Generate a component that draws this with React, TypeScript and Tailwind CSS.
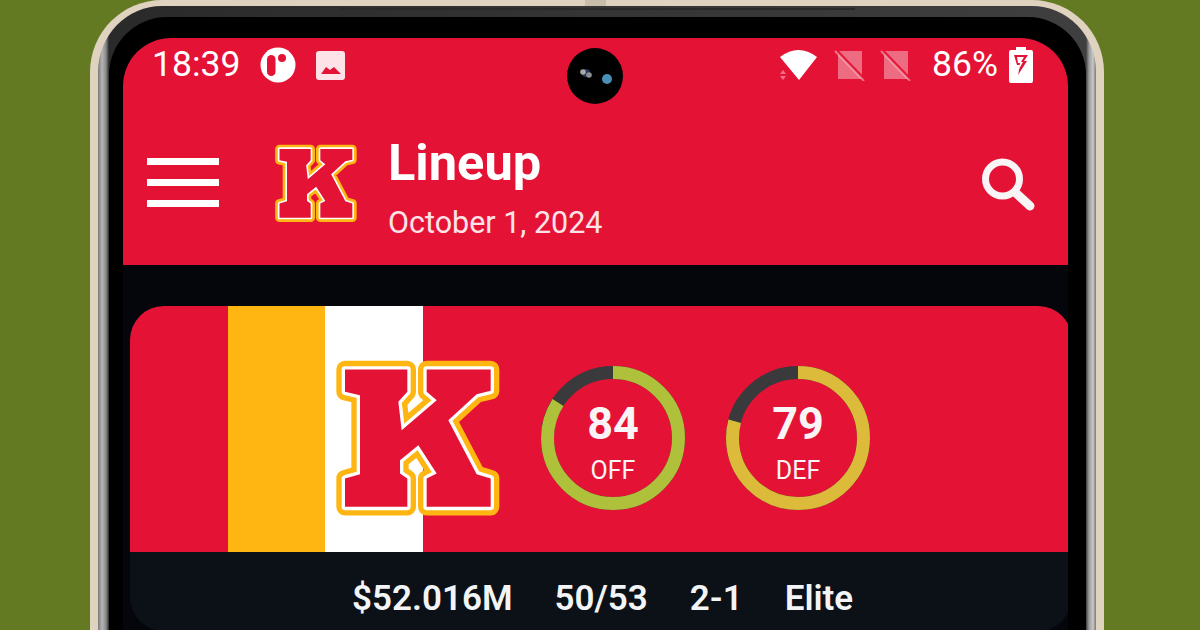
const font = "font-['Roboto',sans-serif]";

function TeamLogo({ className }: { className: string }) {
  const points =
    "75,58 262,58 262,125 235,155 245,240 350,150 320,125 320,58 512,58 512,122 470,132 385,210 470,372 512,385 512,470 320,470 320,385 350,370 295,285 240,330 240,370 262,385 262,470 75,470 75,385 120,372 120,135 75,125";
  return (
    <svg viewBox="48 30 492 470" className={`blur-[0.7px] ${className}`}>
      <polygon points={points} fill="#ffb612" stroke="#ffb612" strokeWidth="52" strokeLinejoin="round" />
      <polygon points={points} fill="#fff" stroke="#fff" strokeWidth="20" strokeLinejoin="round" />
      <polygon points={points} fill="#e41335" />
    </svg>
  );
}

function Ring({ value, label, color }: { value: number; label: string; color: string }) {
  const r = 65.5;
  const c = 2 * Math.PI * r;
  return (
    <div className="relative h-[144px] w-[144px]">
      <svg viewBox="0 0 144 144" className="absolute inset-0 h-full w-full -rotate-90">
        <circle cx="72" cy="72" r={r} fill="none" stroke="#3a3a3c" strokeWidth="13" />
        <circle
          cx="72"
          cy="72"
          r={r}
          fill="none"
          stroke={color}
          strokeWidth="13"
          strokeDasharray={`${(c * value) / 100} ${c}`}
        />
      </svg>
      <div className="relative flex h-full flex-col items-center pt-[32px] text-[#f9f4f5]">
        <span className="text-[45px] leading-[52px] font-bold">{value}</span>
        <span className="mt-[7px] text-[25px] leading-[28px]">{label}</span>
      </div>
    </div>
  );
}

function SimOff({ className }: { className: string }) {
  return (
    <svg viewBox="0 0 32 32" className={`h-[32px] w-[32px] ${className}`}>
      <path d="M4 2 H28 V30 H4 Z" fill="#fff" fillOpacity="0.38" />
      <path d="M2 1 L31 31" stroke="#e41335" strokeWidth="3" />
      <path d="M1 2 L30 32" stroke="#fff" strokeOpacity="0.4" strokeWidth="2" />
    </svg>
  );
}

function StatusBar() {
  return (
    <div className="flex h-[54px] items-center pr-[35px] pl-[29px] text-white">
      <span className="text-[35.5px] leading-none">18:39</span>
      <svg viewBox="0 0 36 36" className="ml-[20px] h-[36px] w-[36px]">
        <circle cx="18" cy="18" r="17.5" fill="#fff" />
        <rect x="7" y="8" width="8.5" height="21" rx="4.25" fill="#e41335" />
        <circle cx="22" cy="11" r="4" fill="#e41335" />
      </svg>
      <svg viewBox="0 0 29 29" className="ml-[20px] h-[29px] w-[29px]">
        <rect width="29" height="29" rx="3" fill="#fde3e8" />
        <path d="M5 23 L10 16 L14 19 L18 16 L25 23 Z" fill="#e41335" />
      </svg>
      <div className="ml-auto flex items-center">
        <svg viewBox="0 0 37 30" className="h-[30px] w-[37px]">
          <path d="M0 7 Q18.5 -7 37 7 L19 30 Z" fill="#fff" />
          <path d="M0 24 l3 -4 3 4 Z M0 26 l3 4 3 -4 Z" fill="#fff" fillOpacity="0.4" />
        </svg>
        <SimOff className="ml-[17px]" />
        <SimOff className="ml-[14px]" />
        <span className="ml-[20px] text-[35.5px] leading-none">86%</span>
        <svg viewBox="0 0 24 36" className="ml-[11px] h-[36px] w-[24px]">
          <path d="M7 0 H17 V3 H22 a2 2 0 0 1 2 2 V34 a2 2 0 0 1 -2 2 H2 a2 2 0 0 1 -2 -2 V5 a2 2 0 0 1 2 -2 H7 Z" fill="#fff" />
          <path d="M5 8 H19 L15 14 H18 L9 28 L11 18 H8 Z" fill="#e41335" />
          <path d="M8 10 H15 L12 15 H14 L10 22 L11 16 H9 Z" fill="#fff" />
        </svg>
      </div>
    </div>
  );
}

function Toolbar() {
  return (
    <div className="flex h-[173px] items-start text-white">
      <div className="mt-[66px] ml-[24px] flex w-[72px] flex-col gap-[14px]">
        <div className="h-[7px] bg-white" />
        <div className="h-[7px] bg-white" />
        <div className="h-[7px] bg-white" />
      </div>
      <TeamLogo className="mt-[52px] ml-[56px] h-[79px] w-[82px]" />
      <div className="ml-[31px] flex flex-col">
        <span className="mt-[43px] text-[50.6px] leading-[56px] font-bold">Lineup</span>
        <span className="mt-[15px] text-[30.5px] leading-[34px] text-[#fde3e8]">October 1, 2024</span>
      </div>
      <svg viewBox="0 0 56 56" className="mt-[64px] mr-[32px] ml-auto h-[56px] w-[56px]">
        <circle cx="22.5" cy="23" r="17" fill="none" stroke="#f9f4f5" strokeWidth="7" />
        <path d="M37 38 L50 50" stroke="#f9f4f5" strokeWidth="9" strokeLinecap="round" />
      </svg>
    </div>
  );
}

function TeamCard() {
  return (
    <div className="ml-[7px] h-[325px] w-[942px] overflow-hidden rounded-[34px] bg-[#0c1017]">
      <div className="relative flex h-[246px] bg-[#e41335]">
        <div className="w-[98px]" />
        <div className="w-[97px] bg-[#ffb612]" />
        <div className="w-[98px] bg-white" />
        <div className="absolute top-[54px] left-[206px] flex items-start">
          <TeamLogo className="h-[157px] w-[164px]" />
          <div className="mt-[6px] ml-[41px] flex gap-[41px]">
            <Ring value={84} label="OFF" color="#afc13a" />
            <Ring value={79} label="DEF" color="#dbbb39" />
          </div>
        </div>
      </div>
      <div className="flex h-[79px] items-start gap-[42px] pt-[27px] pl-[222px] text-[35px] leading-[40px] font-semibold text-[#f3f4f6]">
        <span>$52.016M</span>
        <span>50/53</span>
        <span>2-1</span>
        <span>Elite</span>
      </div>
    </div>
  );
}

export default function App() {
  return (
    <div className={`h-[630px] w-[1200px] overflow-hidden bg-[#637a22] pl-[90px] ${font}`}>
      <div className="relative h-[660px] w-[1014px] rounded-t-[72px] border-x-[8px] border-t-[6px] border-[#dfd2bf] bg-[linear-gradient(90deg,#777_0,#b5b5b5_4px,#8a8a8a_8px,#2a2a2a_11px,#3f3f3f_calc(100%-10px),#9a9a9a_calc(100%-7px),#c8c8c8_calc(100%-3px),#777_100%)]">
        <div className="absolute top-[-6px] left-[487px] h-[6px] w-[21px] bg-[#c9bea9]" />
        <div className="absolute top-[2px] left-[242px] h-[2px] w-[515px] bg-[#2a2a2a]" />
        <div className="relative mt-[11px] mr-[10px] ml-[11px] h-[660px] rounded-t-[58px] bg-black pt-[21px] pr-[18px] pl-[14px]">
          <div className="h-[227px] overflow-hidden rounded-t-[48px] bg-[#e41335]">
            <StatusBar />
            <Toolbar />
          </div>
          <div className="h-[400px] overflow-hidden bg-[#04060b] pt-[41px]">
            <TeamCard />
          </div>
          <svg viewBox="0 0 56 56" className="absolute top-[31px] left-[458px] h-[56px] w-[56px]">
            <circle cx="28" cy="28" r="28" fill="#000" />
            <circle cx="19" cy="25" r="4" fill="#1f3a5c" />
            <circle cx="16" cy="24" r="2.8" fill="#a8a8a8" />
            <circle cx="22" cy="27" r="2.8" fill="#8f8f8f" />
            <circle cx="40" cy="31" r="5" fill="#4a8fb8" />
          </svg>
        </div>
      </div>
    </div>
  );
}
